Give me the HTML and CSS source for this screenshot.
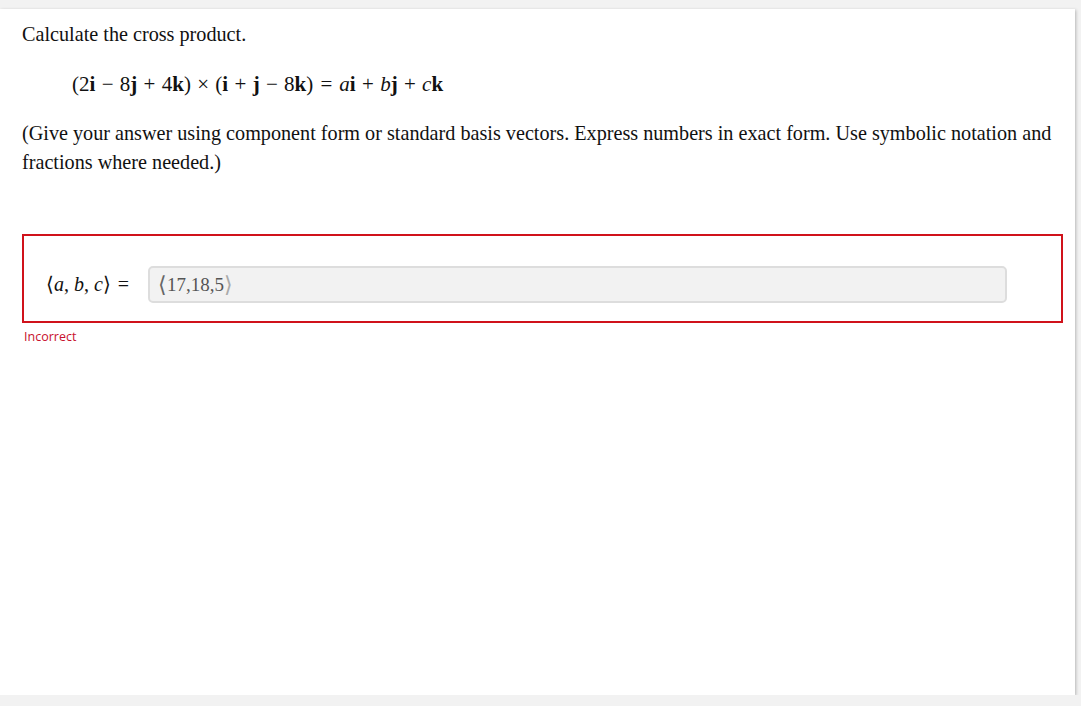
FILE: index.html
```html
<!DOCTYPE html>
<html lang="en">
	<head>
		<meta charset="UTF-8" />
		<meta name="viewport" content="width=device-width, initial-scale=1.0" />
		<title>Cross product</title>
		<link rel="stylesheet" href="styles.css">
	</head>
	<body>
		<main class="card">
			<p class="prompt">Calculate the cross product.</p>
			<p class="equation">(2<b>i</b><span class="op">&minus;</span>8<b>j</b><span class="op">+</span>4<b>k</b>)<span class="op">&times;</span>(<b>i</b><span class="op">+</span><b>j</b><span class="op">&minus;</span>8<b>k</b>)<span class="rel">=</span><i>a</i><b>i</b><span class="op">+</span><i>b</i><b>j</b><span class="op">+</span><i>c</i><b>k</b></p>
			<p class="note">(Give your answer using component form or standard basis vectors. Express numbers in exact form. Use symbolic notation and fractions where needed.)</p>
			<div class="answer">
				<span class="label">&#10216;<i>a</i>, <i>b</i>, <i>c</i>&#10217;<span class="rel">=</span></span>
				<div class="field"><span class="bracket">&#10216;</span>17,18,5<span class="bracket light">&#10217;</span></div>
			</div>
			<div class="status">Incorrect</div>
		</main>
	</body>
</html>
```

FILE: styles.css
```css
* {
	padding: 0;
	margin: 0;
	box-sizing: border-box;
}
body {
	background-color: #f2f2f2;
	padding-top: 9px;
	font-family: "Liberation Serif", "Times New Roman", serif;
	color: #111;
}
.card {
	width: 1075px;
	height: 686px;
	background-color: #fff;
	box-shadow: 1px 1px 3px rgba(0, 0, 0, 0.25);
	padding: 12px 12px 0 22px;
}
.prompt {
	font-size: 20.2px;
	line-height: 26px;
}
.equation {
	font-size: 21px;
	line-height: 26px;
	margin-top: 24px;
	padding-left: 50px;
}
.op {
	margin: 0 0.3em;
}
.rel {
	margin: 0 0.34em;
}
.note {
	font-size: 20.2px;
	line-height: 29px;
	margin-top: 22px;
}
.answer {
	margin-top: 57px;
	border: 2px solid #d0121b;
	height: 89px;
	display: flex;
	align-items: flex-start;
	padding: 30px 0 0 22px;
	gap: 20px;
}
.label {
	font-size: 20px;
	line-height: 37px;
	width: 82px;
	white-space: nowrap;
}
.label .rel {
	margin-right: 0;
}
.field {
	width: 859px;
	height: 37px;
	background-color: #f2f2f2;
	border: 2px solid #dddddd;
	border-radius: 5px;
	font-size: 19px;
	color: #555;
	display: flex;
	align-items: center;
	padding-left: 8px;
}
.bracket {
	font-size: 22px;
	color: #666;
}
.bracket.light {
	color: #aaa;
}
.status {
	font-family: "Open Sans", "Liberation Sans", sans-serif;
	font-size: 12.5px;
	color: #c8102e;
	margin-top: 5px;
	padding-left: 2px;
}
```
